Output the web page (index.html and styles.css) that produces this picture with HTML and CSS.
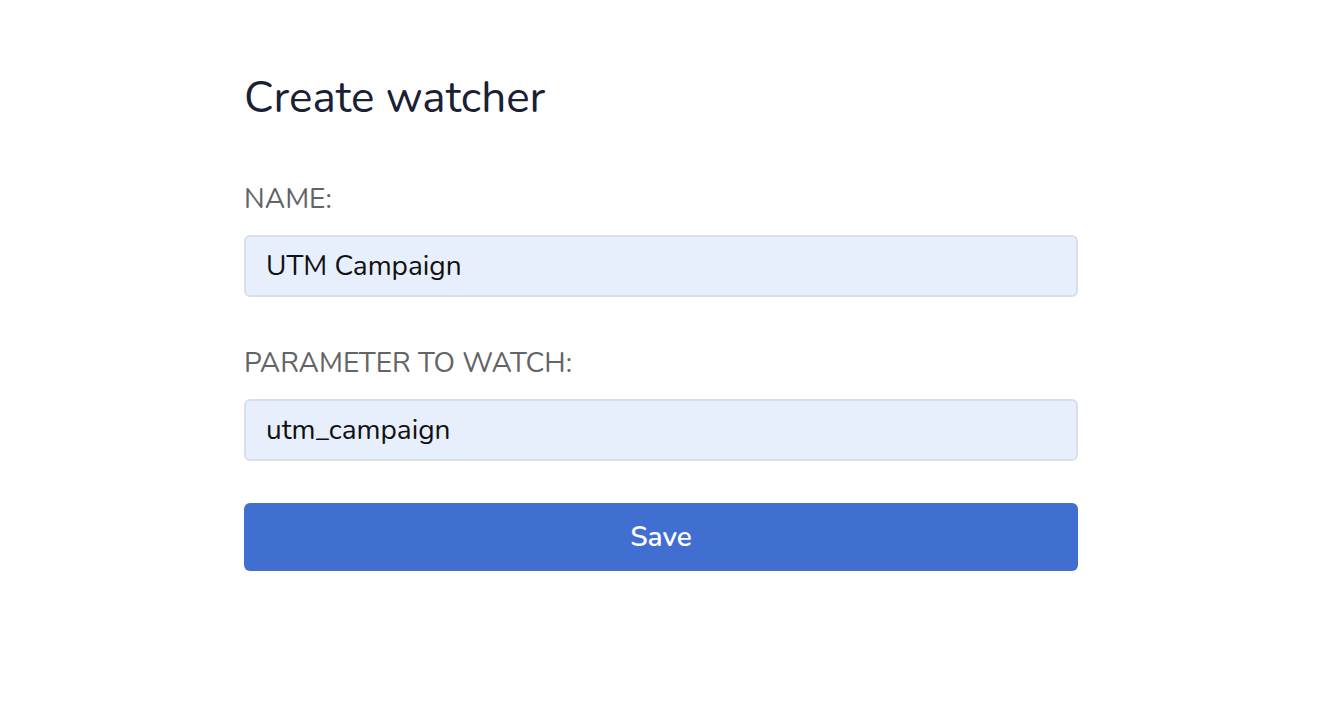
FILE: index.html
```html
<!DOCTYPE html>
<html lang="en">
<head>
    <meta charset="UTF-8">
    <meta name="viewport" content="width=device-width, initial-scale=1.0">
    <title>Create watcher</title>
    <link rel="stylesheet" href="styles.css">
</head>
<body>
    <div class="container">
        <h1>Create watcher</h1>

        <form class="watcher-form">
            <div class="field">
                <label for="name">Name:</label>
                <input type="text" id="name" value="UTM Campaign">
            </div>

            <div class="field">
                <label for="param">Parameter to watch:</label>
                <input type="text" id="param" value="utm_campaign">
            </div>

            <button type="button" class="save-btn">Save</button>
        </form>
    </div>
</body>
</html>
```

FILE: styles.css
```css
body {
    font-family: "Nunito", "Lato", "Open Sans", sans-serif;
    background-color: #fff;
    margin: 0;
    padding: 0;
    color: #1a2035;
}
.container {
    width: 834px;
    margin: 0 auto 0 244px;
    padding-top: 70px;
}
h1 {
    font-size: 44px;
    font-weight: 400;
    margin: 0 0 57px;
    line-height: 56px;
}
.field {
    margin-bottom: 50px;
}
.field label {
    display: block;
    text-transform: uppercase;
    color: #626466;
    font-size: 28px;
    line-height: 32px;
    margin-bottom: 20px;
}
.field input {
    display: block;
    box-sizing: border-box;
    width: 100%;
    height: 62px;
    padding: 0 20px;
    font-family: inherit;
    font-size: 28px;
    color: #111;
    background-color: #e8effc;
    border: 2px solid #dadee6;
    border-radius: 6px;
    outline: none;
}
.save-btn {
    display: block;
    width: 100%;
    height: 68px;
    margin-top: -8px;
    font-family: inherit;
    font-size: 28px;
    font-weight: 600;
    color: #fff;
    background-color: #416ed1;
    border: none;
    border-radius: 6px;
    cursor: pointer;
}
```
